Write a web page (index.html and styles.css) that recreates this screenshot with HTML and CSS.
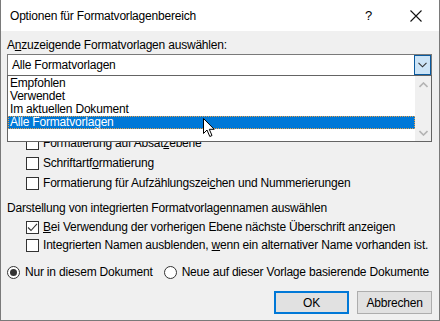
FILE: index.html
```html
<!DOCTYPE html>
<html lang="de">
<head>
<meta charset="utf-8">
<title>Optionen für Formatvorlagenbereich</title>
<link rel="stylesheet" href="styles.css">
</head>
<body>
<div class="dialog">
  <div class="titlebar">
    <span class="title">Optionen für Formatvorlagenbereich</span>
    <span class="help">?</span>
    <svg class="close" width="12" height="12" viewBox="0 0 12 12"><path d="M0.5 0.5 L11.5 11.5 M11.5 0.5 L0.5 11.5" stroke="#111" stroke-width="1.1" fill="none"/></svg>
  </div>
  <div class="content">
    <div class="label first">A<u>n</u>zuzeigende Formatvorlagen auswählen:</div>
    <div class="combo-wrap">
      <div class="combo">
        <span class="combo-text">Alle Formatvorlagen</span>
        <span class="combo-btn"><svg width="9" height="6" viewBox="0 0 9 6"><path d="M0.5 0.8 L4.5 4.8 L8.5 0.8" stroke="#333" stroke-width="1.1" fill="none"/></svg></span>
      </div>
      <div class="list">
        <div class="items">
          <div class="item">Empfohlen</div>
          <div class="item">Verwendet</div>
          <div class="item">Im aktuellen Dokument</div>
          <div class="item selected">Alle Formatvorlagen</div>
        </div>
        <div class="scroll">
          <svg width="9" height="6" viewBox="0 0 9 6"><path d="M0.5 5 L4.5 1 L8.5 5" stroke="#b4b4b4" stroke-width="1.6" fill="none"/></svg>
          <svg width="9" height="6" viewBox="0 0 9 6"><path d="M0.5 1 L4.5 5 L8.5 1" stroke="#b4b4b4" stroke-width="1.6" fill="none"/></svg>
        </div>
      </div>
      <svg class="cursor" width="14" height="20" viewBox="0 0 14 20"><path d="M0.5 0.5 L0.5 15.5 L4 12 L6.8 18.5 L9 17.5 L6.3 11.3 L11.2 11.3 Z" fill="#fff" stroke="#000" stroke-width="1" stroke-linejoin="miter"/></svg>
    </div>
    <div class="checks top">
      <label class="check"><span class="box"></span><span>Formatierung auf Absat<u>z</u>ebene</span></label>
      <label class="check"><span class="box"></span><span>Schriftartf<u>o</u>rmatierung</span></label>
      <label class="check"><span class="box"></span><span>Formatierung für Aufzählungszei<u>c</u>hen und Nummerierungen</span></label>
    </div>
    <div class="label section">Darstellung von integrierten Formatvorlagennamen auswählen</div>
    <div class="checks names">
      <label class="check"><span class="box"><svg width="11" height="11" viewBox="0 0 11 11"><path d="M1 5.5 L4 8.5 L10 1.8" stroke="#333" stroke-width="1.1" fill="none"/></svg></span><span><u>B</u>ei Verwendung der vorherigen Ebene nächste Überschrift anzeigen</span></label>
      <label class="check"><span class="box"></span><span>Integrierten Namen ausblenden, <u>w</u>enn ein alternativer Name vorhanden ist.</span></label>
    </div>
    <div class="radios">
      <label class="radio"><span class="circle on"></span><span>Nur in diesem Dokument</span></label>
      <label class="radio"><span class="circle"></span><span>Neue auf dieser Vorlage basierende Dokumente</span></label>
    </div>
    <div class="buttons">
      <button class="btn default">OK</button>
      <button class="btn">Abbrechen</button>
    </div>
  </div>
</div>
</body>
</html>
```

FILE: styles.css
```css
html, body {
  margin: 0;
  padding: 0;
  background: #f0f0f0;
}
body {
  font-family: "Liberation Sans", Arial, sans-serif;
  font-size: 12px;
  letter-spacing: -0.2px;
  color: #000;
  white-space: nowrap;
}
.dialog {
  width: 440px;
  height: 321px;
  box-sizing: border-box;
  border-left: 1px solid #7a7a7a;
  border-right: 1px solid #7a7a7a;
  border-bottom: 1px solid #7a7a7a;
  background: #f0f0f0;
  display: flex;
  flex-direction: column;
}
.titlebar {
  height: 31px;
  flex: none;
  background: #fff;
  display: flex;
  align-items: center;
  padding-left: 9px;
}
.title {
  flex: 1;
  font-size: 12px;
  padding-top: 1px;
}
.help {
  font-size: 13px;
  width: 10px;
  margin-right: 35px;
}
.close {
  margin-right: 17px;
}
.content {
  padding: 0 7px 0 6px;
  display: flex;
  flex-direction: column;
}
.label {
  line-height: 15px;
  height: 15px;
}
.label.first {
  margin-top: 7px;
}
.combo-wrap {
  position: relative;
  margin-top: 1px;
}
.combo {
  height: 22px;
  box-sizing: border-box;
  border: 1px solid #7a7a7a;
  background: #fff;
  display: flex;
  align-items: center;
  padding-left: 4px;
}
.combo-text {
  flex: 1;
}
.combo-btn {
  width: 17px;
  height: 20px;
  box-sizing: border-box;
  border: 1px solid #0a5a9e;
  background: #cce4f7;
  display: flex;
  align-items: center;
  justify-content: center;
}
.list {
  position: absolute;
  left: 0;
  right: 0;
  top: 21px;
  height: 67px;
  box-sizing: border-box;
  border: 1px solid #646464;
  background: #fff;
  display: flex;
  z-index: 2;
}
.items {
  flex: 1;
  padding-top: 1px;
}
.item {
  height: 13px;
  line-height: 13px;
  padding-left: 2px;
}
.item.selected {
  background: #0078d7;
  color: #fff;
  outline: 1px dotted #e8a04a;
  outline-offset: -1px;
}
.scroll {
  width: 16px;
  background: #f0f0f0;
  display: flex;
  flex-direction: column;
  align-items: center;
  justify-content: space-between;
  padding: 6px 0 5px;
}
.cursor {
  position: absolute;
  left: 196px;
  top: 64px;
  z-index: 3;
}
.checks {
  display: flex;
  flex-direction: column;
  padding-left: 19px;
}
.checks.top {
  margin-top: 57px;
}
.check {
  display: flex;
  align-items: center;
  height: 20px;
}
.checks.names .check {
  height: 18px;
}
.box {
  width: 13px;
  height: 13px;
  box-sizing: border-box;
  border: 1px solid #333;
  background: #fff;
  margin-right: 4px;
  display: flex;
  align-items: center;
  justify-content: center;
  flex: none;
}
.label.section {
  margin-top: 8px;
  margin-bottom: 2px;
}
.radios {
  display: flex;
  gap: 11px;
  margin-top: 8px;
  height: 20px;
  align-items: center;
}
.radio {
  display: flex;
  align-items: center;
}
.circle {
  width: 13px;
  height: 13px;
  box-sizing: border-box;
  border: 1px solid #333;
  border-radius: 50%;
  background: #fff;
  margin-right: 5px;
  position: relative;
  flex: none;
}
.circle.on::after {
  content: "";
  position: absolute;
  left: 2px;
  top: 2px;
  width: 7px;
  height: 7px;
  border-radius: 50%;
  background: #333;
}
.buttons {
  display: flex;
  justify-content: flex-end;
  gap: 8px;
  margin-top: 9px;
}
.btn {
  width: 75px;
  height: 23px;
  box-sizing: border-box;
  font-family: "Liberation Sans", Arial, sans-serif;
  font-size: 12px;
  letter-spacing: -0.2px;
  color: #000;
  background: #e1e1e1;
  border: 1px solid #adadad;
  padding: 0;
}
.btn.default {
  border: 2px solid #0078d7;
}
```
